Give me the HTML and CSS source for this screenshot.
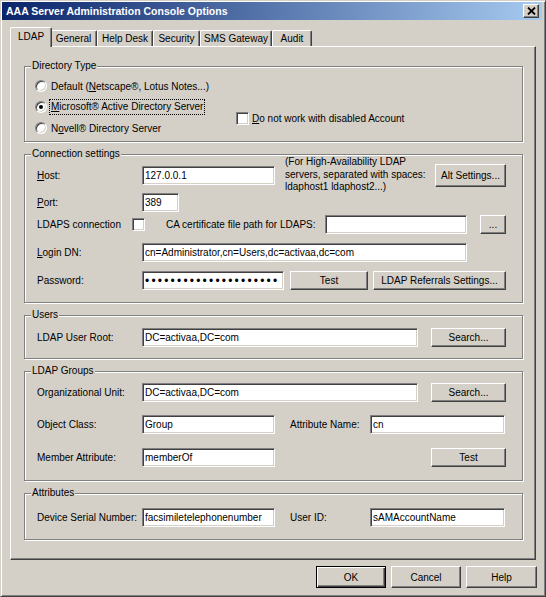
FILE: index.html
```html
<!DOCTYPE html>
<html lang="en">
<head>
<meta charset="utf-8">
<title>AAA Server Administration Console Options</title>
<link rel="stylesheet" href="styles.css">
</head>
<body>
<div class="window">
  <div class="titlebar">
    <span class="title">AAA Server Administration Console Options</span>
    <button class="close" aria-label="Close">
      <svg width="9" height="8" viewBox="0 0 9 8"><path d="M1 0.5l7 7M8 0.5l-7 7" stroke="#000" stroke-width="1.8"/></svg>
    </button>
  </div>

  <div class="tabs">
    <div class="tab active tab-ldap">LDAP</div>
    <div class="tab tab-general">General</div>
    <div class="tab tab-helpdesk">Help Desk</div>
    <div class="tab tab-security">Security</div>
    <div class="tab tab-sms">SMS Gateway</div>
    <div class="tab tab-audit">Audit</div>
  </div>

  <div class="panel">
    <div class="group dirtype">
      <div class="caption">Directory Type</div>
      <div class="dir-grid">
        <label class="radio"><span class="radio-btn"></span><span>Default (<u>N</u>etscape®, Lotus Notes...)</span></label>
        <label class="radio"><span class="radio-btn checked"></span><span class="focus"><u>M</u>icrosoft® Active Directory Server</span></label>
        <label class="radio"><span class="radio-btn"></span><span>N<u>o</u>vell® Directory Server</span></label>
        <label class="check-item"><span class="check"></span><span><u>D</u>o not work with disabled Account</span></label>
      </div>
    </div>

    <div class="group conn">
      <div class="caption">Connection settings</div>
      <div class="row mt6">
        <span class="label"><u>H</u>ost:</span>
        <input class="field w133" value="127.0.0.1">
        <span class="note">(For High-Availability LDAP<br>servers, separated with spaces:<br>ldaphost1 ldaphost2...)</span>
        <button class="btn btn-alt">Alt Settings...</button>
      </div>
      <div class="row mt8">
        <span class="label"><u>P</u>ort:</span>
        <input class="field w37" value="389">
      </div>
      <div class="row mt3">
        <span class="label w95">LDAPS connection</span>
        <span class="check"></span>
        <span class="ca-label">CA certificate file path for LDAPS:</span>
        <input class="field w142" value="">
        <button class="btn btn-browse">...</button>
      </div>
      <div class="row mt9">
        <span class="label"><u>L</u>ogin DN:</span>
        <input class="field w325" value="cn=Administrator,cn=Users,dc=activaa,dc=com">
      </div>
      <div class="row mt9">
        <span class="label">Password:</span>
        <input class="field w142 password" type="password" value="secretpassword1234567">
        <button class="btn btn-test">Test</button>
        <button class="btn btn-referrals">LDAP Referrals Settings...</button>
      </div>
    </div>

    <div class="group users">
      <div class="caption">Users</div>
      <div class="row mt7">
        <span class="label">LDAP User Root:</span>
        <input class="field w276" value="DC=activaa,DC=com">
        <button class="btn btn-side">Search...</button>
      </div>
    </div>

    <div class="group ldap-groups">
      <div class="caption">LDAP Groups</div>
      <div class="row mt6">
        <span class="label">Organizational Unit:</span>
        <input class="field w276" value="DC=activaa,DC=com">
        <button class="btn btn-side">Search...</button>
      </div>
      <div class="row mt13">
        <span class="label">Object Class:</span>
        <input class="field w133" value="Group">
        <span class="label2">Attribute Name:</span>
        <input class="field w135" value="cn">
      </div>
      <div class="row mt14">
        <span class="label">Member Attribute:</span>
        <input class="field w133" value="memberOf">
        <button class="btn btn-side push">Test</button>
      </div>
    </div>

    <div class="group attrs">
      <div class="caption">Attributes</div>
      <div class="row mt9">
        <span class="label">Device Serial Number:</span>
        <input class="field w133" value="facsimiletelephonenumber">
        <span class="label2">User ID:</span>
        <input class="field w135" value="sAMAccountName">
      </div>
    </div>
  </div>

  <div class="actions">
    <button class="btn dlg default">OK</button>
    <button class="btn dlg">Cancel</button>
    <button class="btn dlg help">Help</button>
  </div>
</div>
</body>
</html>
```

FILE: styles.css
```css
* {
  box-sizing: border-box;
}

html,
body {
  margin: 0;
  padding: 0;
}

body {
  background: #d4d0c8;
  font: 10px "Liberation Sans", Arial, sans-serif;
  color: #000;
}

/* Window frame */
.window {
  width: 546px;
  height: 597px;
  background: #d4d0c8;
  border: 1px solid;
  border-color: #d4d0c8 #404040 #404040 #d4d0c8;
  box-shadow: inset 1px 1px #fff, inset -1px -1px #808080;
  padding: 1px 3px 3px 1px;
  display: flex;
  flex-direction: column;
}

.titlebar {
  height: 18px;
  display: flex;
  align-items: center;
  padding: 0 3px 0 4px;
  background: linear-gradient(to right, #0a246a, #a6caf0);
}

.title {
  flex: 1;
  color: #fff;
  font-weight: bold;
  font-size: 10.5px;
  white-space: nowrap;
}

.close {
  width: 16px;
  height: 14px;
  padding: 0;
  margin: 0;
  background: #d4d0c8;
  border: 1px solid;
  border-color: #fff #404040 #404040 #fff;
  box-shadow: inset -1px -1px #808080;
  display: flex;
  align-items: center;
  justify-content: center;
}

/* Tab strip */
.tabs {
  display: flex;
  align-items: flex-end;
  height: 20px;
  margin: 7px 0 -1px 10px;
  position: relative;
  z-index: 1;
}

.tab {
  height: 16px;
  margin-bottom: 1px;
  border-top: 1px solid #fff;
  border-left: 1px solid #fff;
  border-right: 1px solid #404040;
  border-radius: 2px 2px 0 0;
  box-shadow: inset -1px 0 #808080;
  background: #d4d0c8;
  text-align: center;
  line-height: 15px;
  white-space: nowrap;
}

.tab.active {
  height: 20px;
  margin: 0 -2px;
  line-height: 17px;
  position: relative;
  z-index: 2;
}

.tab-ldap { width: 42px; }
.tab-general { width: 47px; }
.tab-helpdesk { width: 56px; }
.tab-security { width: 47px; }
.tab-sms { width: 72px; }
.tab-audit { width: 40px; }

/* Tab page */
.panel {
  margin-left: 8px;
  width: 526px;
  height: 514px;
  border: 1px solid;
  border-color: #fff #404040 #404040 #fff;
  box-shadow: inset -1px -1px #808080;
  padding: 19px 12px 0 13px;
  display: flex;
  flex-direction: column;
  gap: 12px;
}

/* Etched group boxes */
.group {
  border: 1px solid #808080;
  box-shadow: inset 1px 1px #fff, 1px 1px #fff;
}

.caption {
  margin: -7px 0 0 6px;
  padding: 0 1px;
  width: max-content;
  line-height: 12px;
  background: #d4d0c8;
}

.dirtype { padding-bottom: 6px; }
.conn { padding-bottom: 12px; }
.users { padding-bottom: 11px; }
.ldap-groups { padding-bottom: 13px; }
.attrs { padding-bottom: 12px; }

.dir-grid {
  display: grid;
  grid-template-columns: 211px auto;
  grid-template-rows: repeat(3, 14px);
  row-gap: 7px;
  margin-top: 7px;
}

.radio {
  grid-column: 1;
  display: flex;
  align-items: center;
  gap: 4px;
  padding-left: 10px;
  white-space: nowrap;
}

.radio-btn {
  width: 12px;
  height: 12px;
  flex: none;
  border-radius: 50%;
  background: #fff;
  border: 1px solid;
  border-color: #808080 #fff #fff #808080;
  box-shadow: inset 1px 1px #404040, inset -1px -1px #d4d0c8;
  display: flex;
  align-items: center;
  justify-content: center;
}

.radio-btn.checked::after {
  content: "";
  width: 4px;
  height: 4px;
  border-radius: 50%;
  background: #000;
}

.focus {
  outline: 1px dotted #000;
  padding: 0 1px;
  line-height: 14px;
  margin-left: -1px;
}

.check-item {
  grid-column: 2;
  grid-row: 2 / 4;
  align-self: center;
  display: flex;
  align-items: center;
  gap: 3px;
  margin-top: 2px;
  white-space: nowrap;
}

.check {
  width: 13px;
  height: 13px;
  flex: none;
  background: #fff;
  border: 1px solid;
  border-color: #808080 #fff #fff #808080;
  box-shadow: inset 1px 1px #404040, inset -1px -1px #d4d0c8;
}

/* Form rows */
.row {
  display: flex;
  align-items: center;
  height: 19px;
  padding-left: 12px;
  white-space: nowrap;
}

.mt3 { margin-top: 3px; }
.mt6 { margin-top: 6px; }
.mt7 { margin-top: 7px; }
.mt8 { margin-top: 8px; }
.mt9 { margin-top: 9px; }
.mt13 { margin-top: 13px; }
.mt14 { margin-top: 14px; }

.label {
  width: 105px;
  flex: none;
}

.label.w95 { width: 95px; }

.label2 {
  width: 80px;
  margin-left: 15px;
  flex: none;
}

.ca-label {
  width: 159px;
  margin-left: 21px;
  flex: none;
}

.field {
  height: 19px;
  flex: none;
  margin: 0;
  padding: 0 2px;
  font: inherit;
  color: #000;
  background: #fff;
  border: 1px solid;
  border-color: #808080 #fff #fff #808080;
  box-shadow: inset 1px 1px #404040, inset -1px -1px #d4d0c8;
  outline: none;
  border-radius: 0;
}

.field.password {
  font-size: 12px;
  letter-spacing: 2.2px;
  padding-left: 2px;
}

.w37 { width: 37px; }
.w133 { width: 133px; }
.w135 { width: 135px; }
.w142 { width: 142px; }
.w276 { width: 276px; }
.w325 { width: 325px; }

.note {
  width: 150px;
  margin-left: 10px;
  margin-top: -10px;
  align-self: flex-start;
  line-height: 12.5px;
  flex: none;
}

/* Raised push buttons */
.btn {
  height: 19px;
  flex: none;
  margin: 0;
  padding: 0;
  font: inherit;
  color: #000;
  background: #d4d0c8;
  border: 1px solid;
  border-color: #fff #404040 #404040 #fff;
  box-shadow: inset -1px -1px #808080;
  border-radius: 0;
  text-align: center;
  white-space: nowrap;
}

.btn-alt {
  width: 71px;
  height: 23px;
}

.btn-browse {
  width: 26px;
  margin-left: 13px;
}

.btn-test {
  width: 78px;
  margin-left: 6px;
}

.btn-referrals {
  width: 133px;
  margin-left: 5px;
}

.btn-side {
  width: 75px;
  margin-left: 13px;
}

.btn-side.push {
  margin-left: 156px;
}

/* Dialog buttons */
.actions {
  display: flex;
  justify-content: flex-end;
  gap: 5px;
  margin-top: 6px;
  padding-right: 5px;
}

.btn.dlg {
  width: 70px;
  height: 22px;
}

.btn.dlg.help {
  width: 71px;
}

.btn.default {
  border: 1px solid #000;
  box-shadow: inset 1px 1px #fff, inset -1px -1px #404040, inset -2px -2px #808080;
}
```
